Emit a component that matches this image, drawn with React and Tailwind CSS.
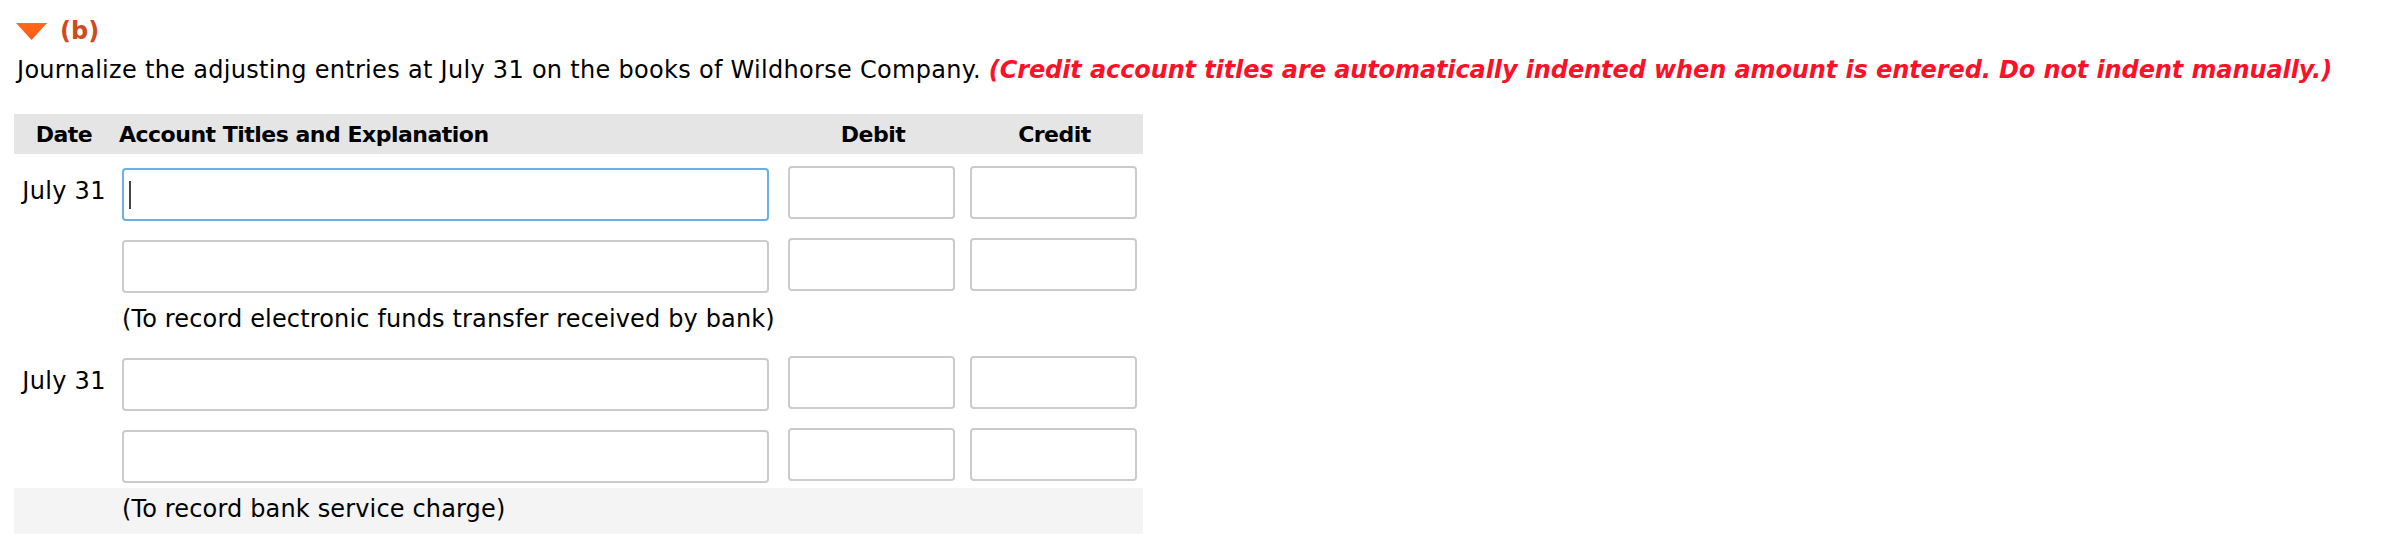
import React from "react";

const font = { fontFamily: '"DejaVu Sans", Verdana, sans-serif' };

function Box({ w, focused, caret }) {
  return (
    <div
      className={`h-[53px] rounded-[4px] bg-white border-2 flex items-center pl-[5px] ${focused ? "border-[#6aafe6]" : "border-[#cbcbcb]"} ${w}`}
    >
      {caret && <span className="w-[2px] h-[28px] bg-[#444]"></span>}
    </div>
  );
}

function EntryRow({ date, focused }) {
  return (
    <div className="flex h-[72px] items-start">
      <div className="w-[100px] text-center pt-[23px] leading-[28px]">{date}</div>
      <div className="ml-[8px] pt-[14px]">
        <Box w="w-[647px]" focused={focused} caret={focused} />
      </div>
      <div className="ml-[19px] pt-[12px]">
        <Box w="w-[167px]" />
      </div>
      <div className="ml-[15px] pt-[12px]">
        <Box w="w-[167px]" />
      </div>
    </div>
  );
}

function Explanation({ text, shaded }) {
  return (
    <div className={`h-[46px] pl-[108px] pt-[7px] leading-[28px] tracking-[0.15px] ${shaded ? "bg-[#f4f4f4]" : ""}`}>
      {text}
    </div>
  );
}

export default function App() {
  return (
    <div className="bg-white w-[2392px] h-[552px] text-[24px] tracking-[0.3px] text-black" style={font}>
      <div className="flex items-center pl-[16px] pt-[16px] h-[46px]">
        <svg width="31" height="17" viewBox="0 0 31 17">
          <defs>
            <linearGradient id="tri" x1="0" y1="0" x2="0" y2="1">
              <stop offset="0" stopColor="#ff6a1a" />
              <stop offset="1" stopColor="#ff5a12" />
            </linearGradient>
          </defs>
          <polygon points="0,0 31,0 15.5,17" fill="url(#tri)" />
        </svg>
        <span className="ml-[13px] font-bold text-[24px] tracking-normal text-[#cf4a1e] leading-[28px]">(b)</span>
      </div>
      <div className="pl-[17px] pt-[10px] leading-[28px]">
        Journalize the adjusting entries at July 31 on the books of Wildhorse Company.{" "}
        <span className="font-bold italic tracking-[-0.1px] text-[#ff1028]">
          (Credit account titles are automatically indented when amount is entered. Do not indent manually.)
        </span>
      </div>

      <div className="ml-[14px] mt-[30px] w-[1129px]">
        <div className="flex h-[40px] items-center bg-[#e5e5e5] font-bold text-[22px] tracking-[-0.5px]">
          <div className="w-[100px] text-center">Date</div>
          <div className="w-[666px] pl-[5px]">Account Titles and Explanation</div>
          <div className="w-[186px] text-center">Debit</div>
          <div className="w-[177px] text-center">Credit</div>
        </div>
        <EntryRow date="July 31" focused />
        <EntryRow date="" />
        <Explanation text="(To record electronic funds transfer received by bank)" />
        <EntryRow date="July 31" />
        <EntryRow date="" />
        <Explanation text="(To record bank service charge)" shaded />
      </div>
    </div>
  );
}
